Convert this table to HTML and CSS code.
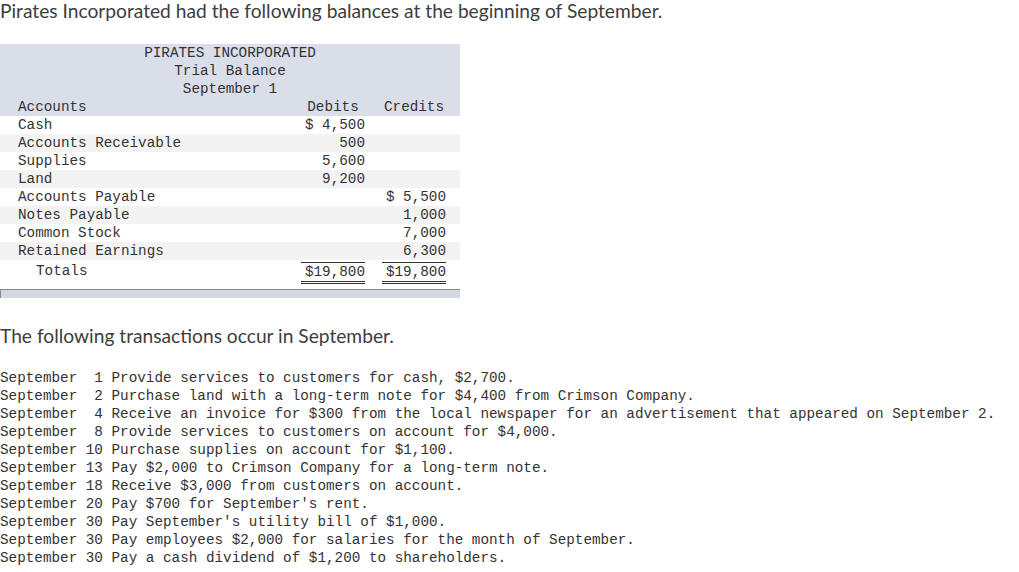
FILE: index.html
```html
<!DOCTYPE html>
<html>
<head>
<meta charset="utf-8">
<link rel="stylesheet" href="styles.css">
</head>
<body>
<p class="lead">Pirates Incorporated had the following balances at the beginning of September.</p>
<div class="tb">
  <div class="tb-head">
    <div class="title">PIRATES INCORPORATED</div>
    <div class="title">Trial Balance</div>
    <div class="title">September 1</div>
    <div class="row">
      <span>Accounts</span><span class="ctr">Debits</span><span class="gap"></span><span class="ctr">Credits</span>
    </div>
  </div>
  <div class="row"><span>Cash</span><span class="num">$ 4,500</span><span class="gap"></span><span class="num"></span></div>
  <div class="row alt"><span>Accounts Receivable</span><span class="num">500</span><span class="gap"></span><span class="num"></span></div>
  <div class="row"><span>Supplies</span><span class="num">5,600</span><span class="gap"></span><span class="num"></span></div>
  <div class="row alt"><span>Land</span><span class="num">9,200</span><span class="gap"></span><span class="num"></span></div>
  <div class="row"><span>Accounts Payable</span><span class="num"></span><span class="gap"></span><span class="num">$ 5,500</span></div>
  <div class="row alt"><span>Notes Payable</span><span class="num"></span><span class="gap"></span><span class="num">1,000</span></div>
  <div class="row"><span>Common Stock</span><span class="num"></span><span class="gap"></span><span class="num">7,000</span></div>
  <div class="row alt"><span>Retained Earnings</span><span class="num"></span><span class="gap"></span><span class="num">6,300</span></div>
  <div class="row total"><span class="indent">Totals</span><span class="num sum">$19,800</span><span class="gap"></span><span class="num sum">$19,800</span></div>
  <div class="tb-foot"></div>
</div>
<p class="lead second">The following transactions occur in September.</p>
<pre class="tx">September  1 Provide services to customers for cash, $2,700.
September  2 Purchase land with a long-term note for $4,400 from Crimson Company.
September  4 Receive an invoice for $300 from the local newspaper for an advertisement that appeared on September 2.
September  8 Provide services to customers on account for $4,000.
September 10 Purchase supplies on account for $1,100.
September 13 Pay $2,000 to Crimson Company for a long-term note.
September 18 Receive $3,000 from customers on account.
September 20 Pay $700 for September's rent.
September 30 Pay September's utility bill of $1,000.
September 30 Pay employees $2,000 for salaries for the month of September.
September 30 Pay a cash dividend of $1,200 to shareholders.</pre>
</body>
</html>
```
FILE: styles.css
```css
html, body {
  margin: 0;
  padding: 0;
  background: #ffffff;
}
body {
  color: #333333;
}
.lead {
  margin: 0;
  font-family: Lato, "Open Sans", sans-serif;
  font-size: 19.2px;
  line-height: 22px;
  color: #3d3d3d;
}
.lead.second {
  margin-top: 27px;
}
.tb {
  width: 460px;
  margin-top: 22px;
  font-family: "Liberation Mono", "DejaVu Sans Mono", monospace;
  font-size: 14.3px;
  line-height: 18px;
  color: #333333;
}
.tb-head {
  background: #dadee8;
}
.title {
  text-align: center;
  white-space: pre;
}
.row {
  display: grid;
  grid-template-columns: 283px 64px 17px 64px;
  padding-left: 18px;
  white-space: pre;
}
.row.alt {
  background: #f3f3f3;
}
.num {
  text-align: right;
}
.ctr {
  text-align: center;
}
.indent {
  padding-left: 18px;
}
.row.total {
  padding-top: 2px;
}
.sum {
  border-top: 1px solid #333333;
  border-bottom: 3px double #333333;
}
.tb-foot {
  margin-top: 5px;
  height: 8px;
  background: #d3d8e3;
  border-top: 1px solid #8c8c8c;
  border-left: 1px solid #8c8c8c;
}
.tx {
  margin: 22px 0 0 0;
  font-family: "Liberation Mono", "DejaVu Sans Mono", monospace;
  font-size: 14.3px;
  line-height: 18px;
  color: #333333;
}
```
